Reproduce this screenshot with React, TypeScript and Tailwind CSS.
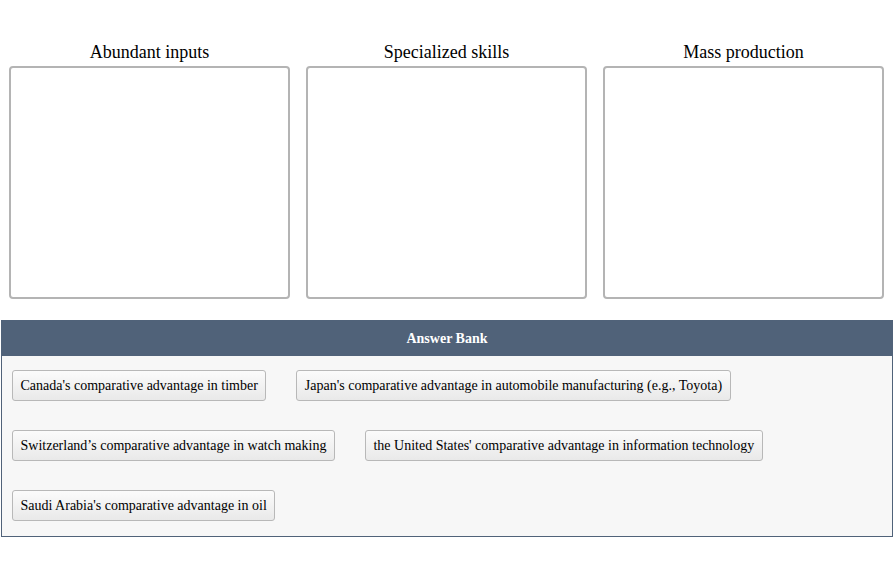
import React from 'react';

const columns = ['Abundant inputs', 'Specialized skills', 'Mass production'];

const answers = [
  "Canada's comparative advantage in timber",
  "Japan's comparative advantage in automobile manufacturing (e.g., Toyota)",
  'Switzerland\u2019s comparative advantage in watch making',
  "the United States' comparative advantage in information technology",
  "Saudi Arabia's comparative advantage in oil",
];

export default function App() {
  return (
    <div className="w-[895px] h-[564px] bg-white text-black font-['Liberation_Serif',serif]">
      <div className="pt-[41px] pl-[9px] pr-[11px] grid grid-cols-3 gap-x-[16px]">
        {columns.map((c) => (
          <div key={c} className="flex flex-col">
            <div className="text-center text-[18px] leading-[22px] mb-[3px]">{c}</div>
            <div className="h-[233px] border-2 border-[#b4b4b4] rounded-[4px] bg-white" />
          </div>
        ))}
      </div>

      <div className="mt-[21px] ml-[1px] mr-[2px] border border-[#506279]">
        <div className="h-[35px] bg-[#506279] text-white font-bold text-[14px] flex items-center justify-center">
          Answer Bank
        </div>
        <div className="bg-[#f7f7f7] pt-[14px] pb-[15px] px-[10px] flex flex-wrap gap-x-[30px] gap-y-[29px]">
          {answers.map((a) => (
            <div
              key={a}
              className="h-[31px] px-[7.5px] flex items-center text-[14px] border border-[#b8b8b8] rounded-[3px] bg-gradient-to-b from-[#fbfbfb] to-[#e9e9e9] whitespace-nowrap"
            >
              {a}
            </div>
          ))}
        </div>
      </div>
    </div>
  );
}
